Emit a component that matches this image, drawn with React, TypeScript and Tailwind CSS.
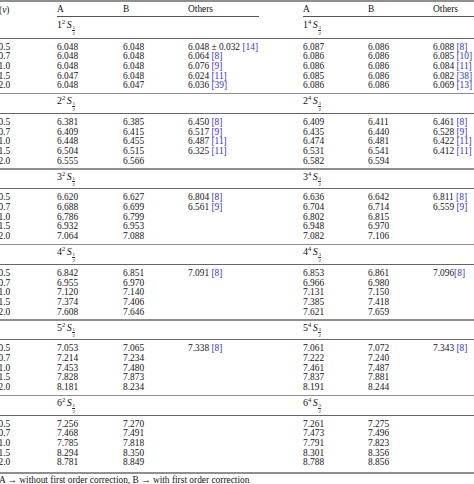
type Other = { v: string; r: string; sp?: boolean } | null;
type Row = [string, string, string, Other, string, string, Other];

interface Block {
  n: string;
  rows: Row[];
}

const V = ['0.5', '0.7', '1.0', '1.5', '2.0'];

function o(v: string, r: string, sp = true): Other {
  return { v, r, sp };
}

function mk(a: string[][], b: string[][], oa: Other[], ob: Other[]): Row[] {
  return V.map((v, i) => [v, a[i][0], a[i][1], oa[i] ?? null, b[i][0], b[i][1], ob[i] ?? null]);
}

const BLOCKS: Block[] = [
  {
    n: '1',
    rows: mk(
      [['6.048', '6.048'], ['6.048', '6.048'], ['6.048', '6.048'], ['6.047', '6.048'], ['6.048', '6.047']],
      [['6.087', '6.086'], ['6.086', '6.086'], ['6.086', '6.086'], ['6.085', '6.086'], ['6.086', '6.086']],
      [o('6.048 ± 0.032', '14'), o('6.064', '8'), o('6.076', '9'), o('6.024', '11'), o('6.036', '39')],
      [o('6.088', '8'), o('6.085', '10'), o('6.084', '11'), o('6.082', '38'), o('6.069', '13')],
    ),
  },
  {
    n: '2',
    rows: mk(
      [['6.381', '6.385'], ['6.409', '6.415'], ['6.448', '6.455'], ['6.504', '6.515'], ['6.555', '6.566']],
      [['6.409', '6.411'], ['6.435', '6.440'], ['6.474', '6.481'], ['6.531', '6.541'], ['6.582', '6.594']],
      [o('6.450', '8'), o('6.517', '9'), o('6.487', '11'), o('6.325', '11')],
      [o('6.461', '8'), o('6.528', '9'), o('6.422', '11'), o('6.412', '11')],
    ),
  },
  {
    n: '3',
    rows: mk(
      [['6.620', '6.627'], ['6.688', '6.699'], ['6.786', '6.799'], ['6.932', '6.953'], ['7.064', '7.088']],
      [['6.636', '6.642'], ['6.704', '6.714'], ['6.802', '6.815'], ['6.948', '6.970'], ['7.082', '7.106']],
      [o('6.804', '8'), o('6.561', '9')],
      [o('6.811', '8'), o('6.559', '9')],
    ),
  },
  {
    n: '4',
    rows: mk(
      [['6.842', '6.851'], ['6.955', '6.970'], ['7.120', '7.140'], ['7.374', '7.406'], ['7.608', '7.646']],
      [['6.853', '6.861'], ['6.966', '6.980'], ['7.131', '7.150'], ['7.385', '7.418'], ['7.621', '7.659']],
      [o('7.091', '8')],
      [o('7.096', '8', false)],
    ),
  },
  {
    n: '5',
    rows: mk(
      [['7.053', '7.065'], ['7.214', '7.234'], ['7.453', '7.480'], ['7.828', '7.873'], ['8.181', '8.234']],
      [['7.061', '7.072'], ['7.222', '7.240'], ['7.461', '7.487'], ['7.837', '7.881'], ['8.191', '8.244']],
      [o('7.338', '8')],
      [o('7.343', '8')],
    ),
  },
  {
    n: '6',
    rows: mk(
      [['7.256', '7.270'], ['7.468', '7.491'], ['7.785', '7.818'], ['8.294', '8.350'], ['8.781', '8.849']],
      [['7.261', '7.275'], ['7.473', '7.496'], ['7.791', '7.823'], ['8.301', '8.356'], ['8.788', '8.856']],
      [],
      [],
    ),
  },
];

const GRID = 'grid grid-cols-[57px_66px_65px_71px_44px_65px_65px_41px]';

// term symbol like 1²S½ with the j value as a tiny stacked fraction
function State({ n, mult, num }: { n: string; mult: string; num: string }) {
  return (
    <span className="inline-flex items-start leading-none">
      <span className="text-[10px]">{n}</span>
      <span className="text-[6.5px] -mt-[1px]">{mult}</span>
      <span className="italic text-[10px] ml-[1.5px]">S</span>
      <span className="flex flex-col items-center text-[5px] leading-[5px] ml-[0.5px] mt-[4.5px]">
        <span>{num}</span>
        <span className="w-[3px] border-t-[0.5px] border-[#333]" />
        <span>2</span>
      </span>
    </span>
  );
}

function Ref({ x }: { x: Other }) {
  if (!x) return <span />;
  return (
    <span className="whitespace-nowrap">
      {x.v}
      {x.sp ? ' ' : ''}
      <span className="text-[#3232c4]">[{x.r}]</span>
    </span>
  );
}

function BlockRows({ b, first, last }: { b: Block; first: boolean; last: boolean }) {
  return (
    <div>
      {!first && <div className="h-[1.5px] bg-[#8f8f8f]" />}
      <div className={GRID + (first ? ' h-[22px]' : ' h-[18.5px]') + ' items-center'}>
        <span />
        <span className={first ? 'pt-[1px]' : '-mt-[1px]'}>
          <State n={b.n} mult="2" num="1" />
        </span>
        <span />
        <span />
        <span />
        <span className={first ? 'pt-[1px]' : '-mt-[1px]'}>
          <State n={b.n} mult="4" num="3" />
        </span>
        <span />
        <span />
      </div>
      <div className="h-px bg-[#666]" />
      <div className={'pt-[4px] ' + (last ? 'pb-[4px]' : 'pb-[2px]')}>
        {b.rows.map((r, i) => (
          <div key={i} className={GRID + ' h-[9.7px] leading-[9.7px]'}>
            <span className="-ml-[1.5px]">{r[0]}</span>
            <span>{r[1]}</span>
            <span>{r[2]}</span>
            <Ref x={r[3]} />
            <span />
            <span>{r[4]}</span>
            <span>{r[5]}</span>
            <Ref x={r[6]} />
          </div>
        ))}
      </div>
    </div>
  );
}

export default function App() {
  return (
    <div className="w-[474px] h-[484px] overflow-hidden bg-white text-[#141414] text-[9.4px] font-['Liberation_Serif','Times_New_Roman',serif]">
      <div className="h-[2px] bg-[#8f8f8f]" />
      <div className={GRID + ' h-[13.5px] items-center'}>
        <span className="-ml-[1px]">
          (<span className="italic">v</span>)
        </span>
        <span className="col-span-3 h-full flex items-center border-b border-[#555]">
          <span className="w-[66px]">A</span>
          <span className="w-[65px]">B</span>
          <span>Others</span>
        </span>
        <span />
        <span className="col-span-3 h-full flex items-center border-b border-[#555]">
          <span className="w-[65px]">A</span>
          <span className="w-[65px]">B</span>
          <span>Others</span>
        </span>
      </div>
      {BLOCKS.map((b, i) => (
        <BlockRows key={b.n} b={b} first={i === 0} last={i === BLOCKS.length - 1} />
      ))}
      <div className="h-[1.5px] bg-[#8f8f8f]" />
      <div className="-ml-[1px] pt-[1px] leading-[10px] whitespace-nowrap">
        A → without first order correction, B → with first order correction
      </div>
    </div>
  );
}
